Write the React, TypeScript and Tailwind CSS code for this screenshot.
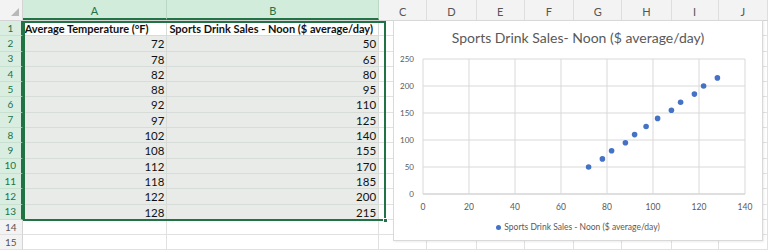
import React from "react";

const rows = [
  { a: "Average Temperature (°F)", b: "Sports Drink Sales - Noon ($ average/day)", head: true },
  { a: 72, b: 50 },
  { a: 78, b: 65 },
  { a: 82, b: 80 },
  { a: 88, b: 95 },
  { a: 92, b: 110 },
  { a: 97, b: 125 },
  { a: 102, b: 140 },
  { a: 108, b: 155 },
  { a: 112, b: 170 },
  { a: 118, b: 185 },
  { a: 122, b: 200 },
  { a: 128, b: 215 },
  { a: "", b: "" },
  { a: "", b: "" },
];

const restCols = [
  { l: "C", w: "w-[49px]" },
  { l: "D", w: "w-[50px]" },
  { l: "E", w: "w-[49px]" },
  { l: "F", w: "w-[50px]" },
  { l: "G", w: "w-[49px]" },
  { l: "H", w: "w-[50px]" },
  { l: "I", w: "w-[48px]" },
  { l: "J", w: "w-[50px]" },
];

const points = rows.slice(1, 13).map((r) => [r.a as number, r.b as number]);

const px = (v: number) => 29 + (v * 322) / 140;
const py = (v: number) => 173 - (v * 135) / 250;

function Chart() {
  return (
    <div className="absolute left-[393px] top-[20px] w-[370px] h-[221px] bg-white border border-[#d9d9d9] shadow-[1px_1px_2px_rgba(0,0,0,0.08)]">
      <div className="absolute inset-x-0 top-[7px] text-center text-[14px] leading-[20px] text-[#595959]">
        Sports Drink Sales- Noon ($ average/day)
      </div>
      <svg className="absolute left-0 top-0" width="370" height="221">
        {[0, 50, 100, 150, 200, 250].map((v) => (
          <g key={v}>
            <line x1={29} x2={351} y1={py(v)} y2={py(v)} stroke={v === 0 ? "#bfbfbf" : "#d9d9d9"} strokeWidth="1" />
            <text x={20} y={py(v) + 3} textAnchor="end" fontSize="8" fill="#595959">
              {v}
            </text>
          </g>
        ))}
        {[0, 20, 40, 60, 80, 100, 120, 140].map((v) => (
          <g key={v}>
            <line x1={px(v)} x2={px(v)} y1={py(250)} y2={py(0)} stroke="#d9d9d9" strokeWidth="1" />
            <text x={px(v)} y={189} textAnchor="middle" fontSize="8.5" fill="#595959">
              {v}
            </text>
          </g>
        ))}
        {points.map(([x, y]) => (
          <circle key={x} cx={px(x)} cy={py(y)} r="2.8" fill="#4472c4" />
        ))}
      </svg>
      <div className="absolute inset-x-0 top-[200px] flex items-center justify-center gap-[3px] text-[8.5px] leading-[12px] text-[#595959]">
        <span className="w-[5px] h-[5px] rounded-full bg-[#4472c4]" />
        <span>Sports Drink Sales - Noon ($ average/day)</span>
      </div>
    </div>
  );
}

export default function App() {
  return (
    <div className="relative w-[768px] h-[251px] overflow-hidden bg-white font-['Lato',sans-serif] text-[#111]">
      {/* column headers */}
      <div className="flex h-[21px] bg-[#f3f3f3] border-b border-[#d4d4d4]">
        <div className="w-[23px] flex items-end justify-end pr-[3px] pb-[4px] border-r border-[#d4d4d4]">
          <div className="w-0 h-0 border-l-[8px] border-l-transparent border-b-[8px] border-b-[#b8b8b8]" />
        </div>
        <div className="w-[147px] pt-[5px] flex items-center justify-center bg-[#d2ecdb] text-[#217346] text-[11px] border-r border-[#b9d8c4] border-b-2 border-b-[#217346]">
          A
        </div>
        <div className="w-[215px] pt-[5px] flex items-center justify-center bg-[#d2ecdb] text-[#217346] text-[11px] border-r border-[#b9d8c4] border-b-2 border-b-[#217346]">
          B
        </div>
        {restCols.map((c) => (
          <div key={c.l} className={`${c.w} pt-[5px] flex items-center justify-center text-[11px] text-[#555] border-r border-[#dedede]`}>
            {c.l}
          </div>
        ))}
      </div>

      {/* rows */}
      {rows.map((r, i) => {
        const sel = i < 13;
        const fill = sel && !r.head ? "bg-[#e8ebe8]" : "bg-white";
        return (
          <div key={i} className="flex h-[15.3px] text-[11.5px] leading-[15px]">
            <div
              className={`w-[23px] flex items-center justify-center text-[10px] border-b ${
                sel
                  ? "bg-[#d9eee1] text-[#217346] border-[#c8e0d0] border-r-2 border-r-[#217346]"
                  : "bg-[#f3f3f3] text-[#555] border-[#e1e1e1] border-r border-r-[#d4d4d4]"
              }`}
            >
              {i + 1}
            </div>
            <div
              className={`w-[147px] px-[2px] border-b border-r ${fill} ${
                sel ? "border-[#d8dcd8]" : "border-[#e1e1e1]"
              } ${r.head ? "font-bold text-left text-[11px]" : "text-right"} whitespace-nowrap`}
            >
              {r.a}
            </div>
            <div
              className={`w-[215px] px-[2px] border-b border-r ${fill} ${
                sel ? "border-[#d8dcd8]" : "border-[#e1e1e1]"
              } ${r.head ? "font-bold text-left text-[11px]" : "text-right"} whitespace-nowrap`}
            >
              {r.b}
            </div>
            {restCols.map((c) => (
              <div key={c.l} className={`${c.w} border-b border-r border-[#e1e1e1]`} />
            ))}
          </div>
        );
      })}

      {/* selection outline */}
      <div className="absolute left-[23px] top-[21px] w-[363px] h-[200px] border-2 border-[#217346] pointer-events-none" />
      <div className="absolute left-[383px] top-[218px] w-[5px] h-[5px] bg-[#217346] border border-white" />

      <Chart />
    </div>
  );
}
